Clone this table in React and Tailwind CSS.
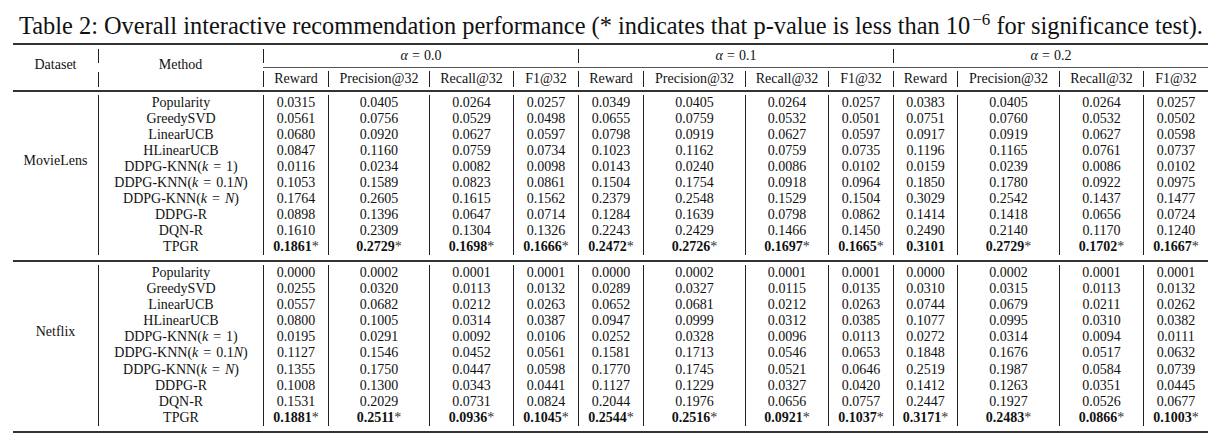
import React from 'react';

const COLW = ['w-[65px]', 'w-[101px]', 'w-[84px]', 'w-[65px]', 'w-[65px]', 'w-[102px]', 'w-[83px]', 'w-[65px]', 'w-[64px]', 'w-[102px]', 'w-[84px]', 'w-[65px]'];
const METRICS = ['Reward', 'Precision@32', 'Recall@32', 'F1@32'];
const ALPHAS = ['0.0', '0.1', '0.2'];

const K = ({ children }) => (
  <span>
    DDPG-KNN(<i>k</i>
    <span className="mx-[5px]">=</span>
    {children})
  </span>
);

const METHODS = [
  'Popularity',
  'GreedySVD',
  'LinearUCB',
  'HLinearUCB',
  <K>1</K>,
  <K>0.1<i>N</i></K>,
  <K><i>N</i></K>,
  'DDPG-R',
  'DQN-R',
  'TPGR',
];

const MOVIELENS = [
  '0.0315 0.0405 0.0264 0.0257 0.0349 0.0405 0.0264 0.0257 0.0383 0.0405 0.0264 0.0257',
  '0.0561 0.0756 0.0529 0.0498 0.0655 0.0759 0.0532 0.0501 0.0751 0.0760 0.0532 0.0502',
  '0.0680 0.0920 0.0627 0.0597 0.0798 0.0919 0.0627 0.0597 0.0917 0.0919 0.0627 0.0598',
  '0.0847 0.1160 0.0759 0.0734 0.1023 0.1162 0.0759 0.0735 0.1196 0.1165 0.0761 0.0737',
  '0.0116 0.0234 0.0082 0.0098 0.0143 0.0240 0.0086 0.0102 0.0159 0.0239 0.0086 0.0102',
  '0.1053 0.1589 0.0823 0.0861 0.1504 0.1754 0.0918 0.0964 0.1850 0.1780 0.0922 0.0975',
  '0.1764 0.2605 0.1615 0.1562 0.2379 0.2548 0.1529 0.1504 0.3029 0.2542 0.1437 0.1477',
  '0.0898 0.1396 0.0647 0.0714 0.1284 0.1639 0.0798 0.0862 0.1414 0.1418 0.0656 0.0724',
  '0.1610 0.2309 0.1304 0.1326 0.2243 0.2429 0.1466 0.1450 0.2490 0.2140 0.1170 0.1240',
  '0.1861* 0.2729* 0.1698* 0.1666* 0.2472* 0.2726* 0.1697* 0.1665* 0.3101 0.2729* 0.1702* 0.1667*',
];

const NETFLIX = [
  '0.0000 0.0002 0.0001 0.0001 0.0000 0.0002 0.0001 0.0001 0.0000 0.0002 0.0001 0.0001',
  '0.0255 0.0320 0.0113 0.0132 0.0289 0.0327 0.0115 0.0135 0.0310 0.0315 0.0113 0.0132',
  '0.0557 0.0682 0.0212 0.0263 0.0652 0.0681 0.0212 0.0263 0.0744 0.0679 0.0211 0.0262',
  '0.0800 0.1005 0.0314 0.0387 0.0947 0.0999 0.0312 0.0385 0.1077 0.0995 0.0310 0.0382',
  '0.0195 0.0291 0.0092 0.0106 0.0252 0.0328 0.0096 0.0113 0.0272 0.0314 0.0094 0.0111',
  '0.1127 0.1546 0.0452 0.0561 0.1581 0.1713 0.0546 0.0653 0.1848 0.1676 0.0517 0.0632',
  '0.1355 0.1750 0.0447 0.0598 0.1770 0.1745 0.0521 0.0646 0.2519 0.1987 0.0584 0.0739',
  '0.1008 0.1300 0.0343 0.0441 0.1127 0.1229 0.0327 0.0420 0.1412 0.1263 0.0351 0.0445',
  '0.1531 0.2029 0.0731 0.0824 0.2044 0.1976 0.0656 0.0757 0.2447 0.1927 0.0526 0.0677',
  '0.1881* 0.2511* 0.0936* 0.1045* 0.2544* 0.2516* 0.0921* 0.1037* 0.3171* 0.2483* 0.0866* 0.1003*',
];

const Value = ({ v, bold }) => {
  if (!bold) return <span>{v}</span>;
  const star = v.endsWith('*');
  return (
    <span>
      <b>{star ? v.slice(0, -1) : v}</b>
      {star && <span className="text-[#333]">*</span>}
    </span>
  );
};

const Block = ({ name, rows }) => {
  const cells = rows.map((r) => r.split(' '));
  return (
    <div className="flex pt-[3px] pb-[5px]">
      <div className="w-[85px] flex items-center justify-center pb-[28px]">{name}</div>
      <div className="w-[165px] border-l border-[#222] flex flex-col">
        {METHODS.map((m, i) => (
          <div key={i} className="leading-[16.1px] text-center whitespace-nowrap">{m}</div>
        ))}
      </div>
      {COLW.map((w, c) => (
        <div key={c} className={`${w} border-l border-[#222] flex flex-col`}>
          {cells.map((r, i) => (
            <div key={i} className="leading-[16.1px] text-center whitespace-nowrap">
              <Value v={r[c]} bold={i === 9} />
            </div>
          ))}
        </div>
      ))}
    </div>
  );
};

export default function App() {
  return (
    <div className="w-[1222px] h-[447px] bg-white text-[#111] font-['Liberation_Serif',serif] text-[14px]">
      {/* caption */}
      <div className="h-[43px] pt-[12px] text-center text-[24.4px] leading-[28px] whitespace-nowrap">
        Table 2: Overall interactive recommendation performance (* indicates that p-value is less than 10
        <span className="text-[17px] leading-none relative -top-[9px] ml-[2px]">−6</span> for significance test).
      </div>

      <div className="ml-[13px] w-[1195px]">
        <div className="h-[2px] bg-[#333]" />

        {/* header */}
        <div className="flex">
          <div className="w-[85px] flex items-center justify-center pb-[7px]">Dataset</div>
          <div className="w-[165px] relative flex items-center justify-center pb-[7px]">
            Method
            <span className="absolute left-0 top-[4px] h-[14px] w-px bg-[#222]" />
            <span className="absolute left-0 top-[27px] h-[15px] w-px bg-[#222]" />
          </div>
          <div className="flex flex-col">
            <div className="flex border-b border-[#555]">
              {ALPHAS.map((a) => (
                <div key={a} className="w-[315px] h-[22px] py-[4px] flex">
                  <div className="flex-1 border-l border-[#222] flex items-center justify-center leading-none">
                    <span>
                      <i>α</i>
                      <span className="mx-[4px]">=</span>
                      {a}
                    </span>
                  </div>
                </div>
              ))}
            </div>
            <div className="flex">
              {COLW.map((w, c) => (
                <div key={c} className={`${w} h-[22px] py-[3px] flex`}>
                  <div className="flex-1 border-l border-[#222] flex items-center justify-center leading-none whitespace-nowrap">
                    {METRICS[c % 4]}
                  </div>
                </div>
              ))}
            </div>
          </div>
        </div>

        <div className="h-[1.5px] bg-[#333]" />
        <Block name="MovieLens" rows={MOVIELENS} />
        <div className="h-[1.5px] bg-[#333]" />
        <Block name="Netflix" rows={NETFLIX} />
        <div className="h-[2px] bg-[#333]" />
      </div>
    </div>
  );
}
